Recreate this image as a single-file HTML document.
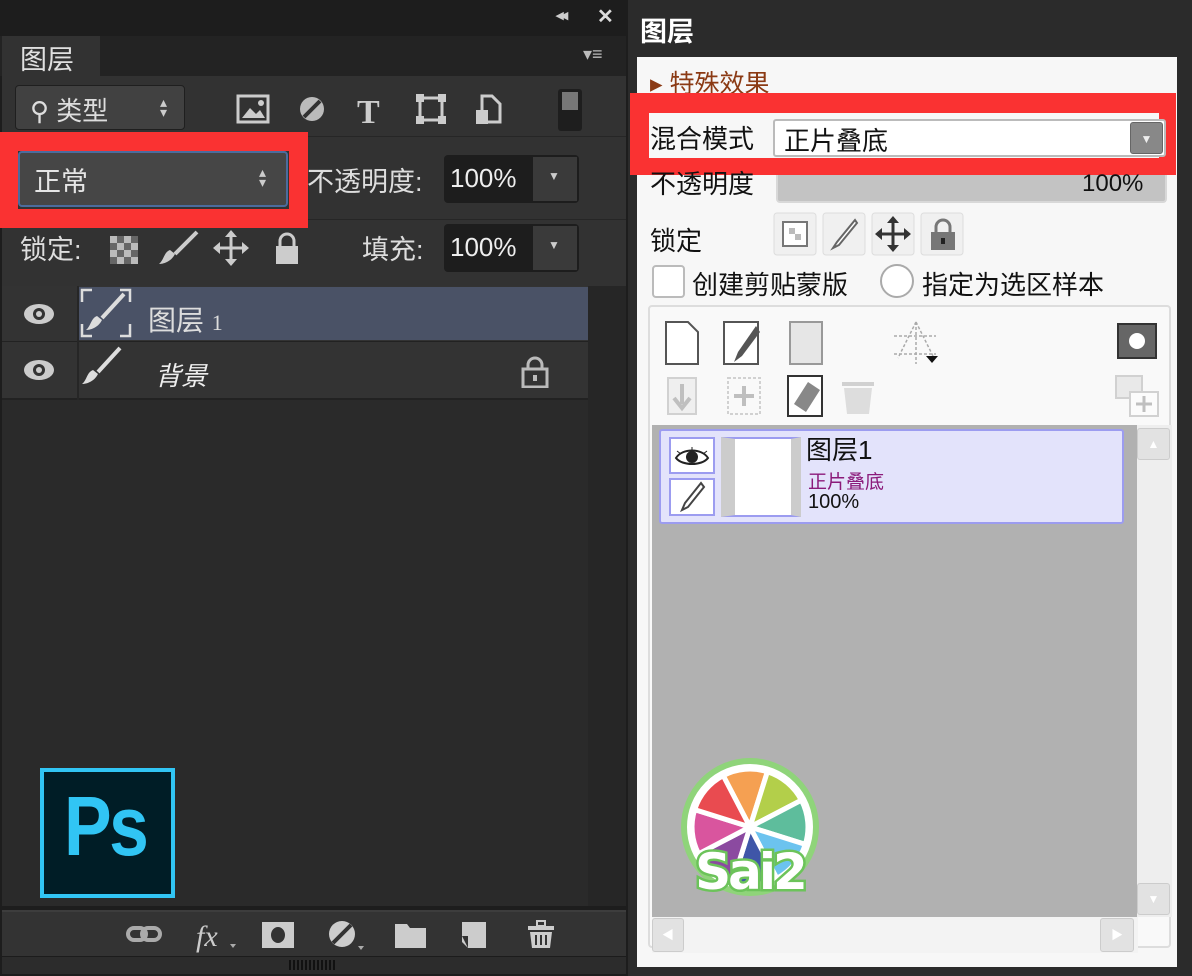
<!DOCTYPE html>
<html><head><meta charset="utf-8">
<style>
*{margin:0;padding:0;box-sizing:border-box}
body{width:1192px;height:976px;background:#2b2b2b;position:relative;overflow:hidden;font-family:"Liberation Sans","Noto Sans CJK SC",sans-serif}
.a{position:absolute}
.cj{font-family:"Liberation Sans","Noto Sans CJK SC",sans-serif}
</style></head><body>
<!-- LEFT PS PANEL -->
<div class="a" style="left:0;top:0;width:628px;height:976px;background:#1d1d1d"></div>
<div class="a" style="left:556px;top:6px;color:#ccc;font-size:15px;font-weight:bold;letter-spacing:-3px">◂◂</div>
<div class="a" style="left:597px;top:4px;color:#ddd;font-size:20px;font-weight:bold">✕</div>
<div class="a" style="left:0;top:36px;width:626px;height:40px;background:#232323"></div>
<div class="a" style="left:2px;top:36px;width:98px;height:40px;background:#323232"></div>
<div class="a cj" style="left:20px;top:38px;color:#e0e0e0;font-size:27px">图层</div>
<div class="a" style="left:583px;top:44px;color:#bbb;font-size:18px">▾≡</div>
<div class="a" style="left:2px;top:76px;width:624px;height:210px;background:#323232"></div>
<div class="a" style="left:2px;top:136px;width:624px;height:1px;background:#262626"></div>
<div class="a" style="left:2px;top:219px;width:624px;height:1px;background:#262626"></div>
<!-- search box -->
<div class="a" style="left:15px;top:85px;width:170px;height:45px;background:#414141;border:1px solid #1f1f1f;border-radius:4px"></div>
<div class="a cj" style="left:30px;top:91px;color:#ddd;font-size:26px">⚲ 类型</div>
<div class="a" style="left:160px;top:97px;color:#ccc;font-size:14px;line-height:10px">▴<br>▾</div>
<svg class="a" style="left:230px;top:90px" width="300" height="40" viewBox="0 0 300 40">
<rect x="8" y="6" width="30" height="26" fill="none" stroke="#ccc" stroke-width="3"/><path d="M12 28l8-10 6 6 4-4 5 8z" fill="#ccc"/><circle cx="31" cy="13" r="3" fill="#ccc"/>
<circle cx="82" cy="19" r="12" fill="#bbb"/><path d="M74 27L90 11" stroke="#323232" stroke-width="4"/>
<text x="127" y="33" font-family="Liberation Serif" font-size="34" font-weight="bold" fill="#ccc">T</text>
<rect x="190" y="8" width="22" height="22" fill="none" stroke="#ccc" stroke-width="3"/><g fill="#ccc"><rect x="186" y="4" width="8" height="8"/><rect x="208" y="4" width="8" height="8"/><rect x="186" y="26" width="8" height="8"/><rect x="208" y="26" width="8" height="8"/></g>
<path d="M252 6h10l8 8v18h-18z" fill="none" stroke="#ccc" stroke-width="3"/><rect x="246" y="20" width="12" height="14" fill="#ccc"/>
</svg>
<div class="a" style="left:558px;top:89px;width:24px;height:42px;background:#1e1e1e;border-radius:3px"></div>
<div class="a" style="left:562px;top:92px;width:16px;height:18px;background:#777"></div>
<!-- blend select -->
<div class="a" style="left:18px;top:151px;width:270px;height:56px;background:#464646;border:2px solid #4b6c9e;border-radius:4px"></div>
<div class="a cj" style="left:34px;top:160px;color:#e5e5e5;font-size:27px">正常</div>
<div class="a" style="left:259px;top:167px;color:#ccc;font-size:14px;line-height:10px">▴<br>▾</div>
<div class="a" style="left:0;top:132px;width:308px;height:96px;border:19px solid #fa3232;border-left-width:18px"></div>
<div class="a cj" style="left:307px;top:160px;color:#ddd;font-size:27px">不透明度:</div>
<div class="a" style="left:444px;top:155px;width:135px;height:48px;background:#1d1d1d;border-radius:4px"></div>
<div class="a" style="left:533px;top:157px;width:44px;height:44px;background:#3a3a3a"></div>
<div class="a" style="left:450px;top:163px;color:#eee;font-size:26px">100%</div>
<div class="a" style="left:548px;top:169px;color:#ccc;font-size:12px">▼</div>
<div class="a cj" style="left:20px;top:228px;color:#ddd;font-size:27px">锁定:</div>
<svg class="a" style="left:105px;top:228px" width="200" height="40" viewBox="0 0 200 40">
<g fill="#bbb"><rect x="5" y="8" width="28" height="28"/></g><g fill="#666"><rect x="12" y="8" width="7" height="7"/><rect x="26" y="8" width="7" height="7"/><rect x="5" y="15" width="7" height="7"/><rect x="19" y="15" width="7" height="7"/><rect x="12" y="22" width="7" height="7"/><rect x="26" y="22" width="7" height="7"/><rect x="5" y="29" width="7" height="7"/><rect x="19" y="29" width="7" height="7"/></g>
<path d="M92 4L70 26" stroke="#ccc" stroke-width="4"/><path d="M54 36c4 0 12-2 16-10l-5-4c-6 2-6 10-11 14z" fill="#ccc"/>
<path d="M126 4v32M110 20h32" stroke="#ccc" stroke-width="3"/><path d="M126 2l-6 7h12zM126 38l-6-7h12zM108 20l7-6v12zM144 20l-7-6v12z" fill="#ccc"/>
<rect x="171" y="18" width="22" height="18" fill="#ccc"/><path d="M175 18v-5a7 7 0 0 1 14 0v5" fill="none" stroke="#ccc" stroke-width="3"/>
</svg>
<div class="a cj" style="left:362px;top:228px;color:#ddd;font-size:27px">填充:</div>
<div class="a" style="left:444px;top:224px;width:135px;height:48px;background:#1d1d1d;border-radius:4px"></div>
<div class="a" style="left:533px;top:226px;width:44px;height:44px;background:#3a3a3a"></div>
<div class="a" style="left:450px;top:232px;color:#eee;font-size:26px">100%</div>
<div class="a" style="left:548px;top:238px;color:#ccc;font-size:12px">▼</div>
<!-- layers list -->
<div class="a" style="left:2px;top:286px;width:586px;height:620px;background:#2a2a2a"></div>
<div class="a" style="left:588px;top:286px;width:38px;height:620px;background:#262626"></div>
<div class="a" style="left:2px;top:286px;width:586px;height:55px;background:#333"></div>
<div class="a" style="left:78px;top:287px;width:510px;height:53px;background:#4a5266"></div>
<div class="a" style="left:2px;top:341px;width:586px;height:59px;background:#333;border-top:1px solid #222;border-bottom:2px solid #222"></div>
<div class="a" style="left:77px;top:286px;width:2px;height:114px;background:#262626"></div>
<svg class="a" style="left:22px;top:300px" width="34" height="90" viewBox="0 0 34 90"><ellipse cx="17" cy="14" rx="15" ry="10" fill="#ccc"/><circle cx="17" cy="14" r="6" fill="#333"/><circle cx="17" cy="14" r="3" fill="#ccc"/><ellipse cx="17" cy="70" rx="15" ry="10" fill="#ccc"/><circle cx="17" cy="70" r="6" fill="#333"/><circle cx="17" cy="70" r="3" fill="#ccc"/></svg>
<svg class="a" style="left:80px;top:288px" width="52" height="110" viewBox="0 0 52 110"><path d="M2 14V2h10M40 2h10v12M2 36v12h10M40 48h10V36" fill="none" stroke="#ddd" stroke-width="2.5"/><path d="M44 6L22 30" stroke="#ddd" stroke-width="4"/><path d="M6 42c4 0 12-2 16-10l-5-4c-6 2-6 10-11 14z" fill="#ddd"/><path d="M40 60L18 84" stroke="#ddd" stroke-width="4"/><path d="M2 96c4 0 12-2 16-10l-5-4c-6 2-6 10-11 14z" fill="#ddd"/></svg>
<div class="a cj" style="left:148px;top:299px;color:#ddd;font-size:28px">图层 <span style="font-size:22px;font-family:'Liberation Serif'">1</span></div>
<div class="a cj" style="left:155px;top:356px;color:#eee;font-size:26px;font-style:italic">背景</div>
<svg class="a" style="left:520px;top:356px" width="30" height="32"><rect x="3" y="13" width="24" height="18" fill="none" stroke="#bbb" stroke-width="3"/><path d="M8 13V9a7 7 0 0 1 14 0v4" fill="none" stroke="#bbb" stroke-width="3"/><rect x="13" y="19" width="4" height="6" fill="#bbb"/></svg>
<!-- Ps logo -->
<div class="a" style="left:40px;top:768px;width:135px;height:130px;background:#001d26;border:4px solid #31c5f4"></div>
<div class="a" style="left:64px;top:778px;color:#31c5f4;font-size:84px;font-weight:bold;font-family:'Liberation Sans Narrow','Liberation Sans';letter-spacing:-3px;transform:scaleX(0.85);transform-origin:left">Ps</div>
<!-- bottom bar -->
<div class="a" style="left:2px;top:910px;width:624px;height:46px;background:#333;border-top:2px solid #3d3d3d"></div>
<div class="a" style="left:2px;top:956px;width:624px;height:18px;background:#2c2c2c;border-top:1px solid #1c1c1c"></div>
<div class="a" style="left:289px;top:960px;width:48px;height:10px;background:repeating-linear-gradient(90deg,#111 0 2px,transparent 2px 4px)"></div>
<svg class="a" style="left:120px;top:914px" width="500" height="40" viewBox="0 0 500 40">
<g fill="none" stroke="#aaa" stroke-width="4"><rect x="8" y="14" width="18" height="12" rx="6"/><rect x="22" y="14" width="18" height="12" rx="6"/></g>
<text x="76" y="32" font-family="Liberation Serif" font-style="italic" font-size="30" fill="#ccc">fx</text><path d="M110 30h6l-3 4z" fill="#aaa"/>
<rect x="142" y="8" width="32" height="26" fill="#ccc"/><ellipse cx="158" cy="21" rx="7" ry="8" fill="#333"/>
<circle cx="222" cy="20" r="13" fill="#ccc"/><path d="M213 29l18-18" stroke="#333" stroke-width="4"/><path d="M238 32h6l-3 4z" fill="#aaa"/>
<path d="M275 10h12l3 4h16v20h-31z" fill="#ccc"/>
<path d="M342 8h24v26h-18l-6-6z" fill="#ccc"/><path d="M342 22h6v12" fill="#333"/>
<rect x="408" y="12" width="26" height="4" fill="#ccc"/><rect x="417" y="7" width="8" height="5" fill="none" stroke="#ccc" stroke-width="2"/><path d="M410 18h22l-2 16h-18z" fill="#ccc"/><path d="M416 21v10M421 21v10M426 21v10" stroke="#333" stroke-width="2"/>
</svg>
<!-- RIGHT SAI PANEL -->
<div class="a cj" style="left:640px;top:10px;color:#fff;font-size:27px;font-weight:bold">图层</div>
<div class="a" style="left:637px;top:57px;width:540px;height:910px;background:#f7f7f7"></div>
<div class="a cj" style="left:650px;top:64px;color:#8b3a14;font-size:25px">▸ 特殊效果</div>
<div class="a" style="left:630px;top:93px;width:546px;height:82px;border:17px solid #fa3232;border-top-width:20px;border-left-width:19px"></div>
<div class="a cj" style="left:650px;top:119px;color:#111;font-size:26px">混合模式</div>
<div class="a" style="left:773px;top:119px;width:393px;height:38px;background:#fff;border:2px solid #bbb;border-radius:3px"></div>
<div class="a cj" style="left:784px;top:121px;color:#111;font-size:26px">正片叠底</div>
<div class="a" style="left:1130px;top:122px;width:33px;height:32px;background:#888;border:1px solid #666;border-radius:3px;color:#eee;font-size:12px;text-align:center;line-height:32px">▼</div>
<div class="a cj" style="left:650px;top:170px;color:#111;font-size:26px;height:33px;overflow:hidden;line-height:28px">不透明度</div>
<div class="a" style="left:776px;top:175px;width:391px;height:28px;background:#c3c3c3;border:2px solid #d8d8d8;border-top:none;border-radius:0 0 4px 4px"></div>
<div class="a" style="left:1082px;top:170px;color:#111;font-size:24px">100%</div>
<div class="a cj" style="left:650px;top:221px;color:#111;font-size:26px">锁定</div>
<svg class="a" style="left:773px;top:212px" width="194" height="44" viewBox="0 0 194 44">
<g fill="#f0f0f0" stroke="#ddd"><rect x="1" y="1" width="42" height="42" rx="3"/><rect x="50" y="1" width="42" height="42" rx="3"/><rect x="99" y="1" width="42" height="42" rx="3"/><rect x="148" y="1" width="42" height="42" rx="3"/></g>
<rect x="10" y="10" width="24" height="24" fill="#fff" stroke="#777" stroke-width="2"/><g fill="#bbb"><rect x="16" y="16" width="6" height="6"/><rect x="22" y="22" width="6" height="6"/></g>
<path d="M82 8L64 30l-4 6 6-3 18-22z" fill="#fff" stroke="#666" stroke-width="2"/>
<path d="M120 6v32M104 22h32" stroke="#333" stroke-width="3"/><path d="M120 4l-6 7h12zM120 40l-6-7h12zM102 22l7-6v12zM138 22l-7-6v12z" fill="#333"/>
<rect x="158" y="20" width="24" height="18" fill="#777"/><path d="M163 20v-5a7 7 0 0 1 14 0v5" fill="none" stroke="#777" stroke-width="3"/><rect x="168" y="26" width="4" height="6" fill="#222"/>
</svg>
<div class="a" style="left:652px;top:265px;width:33px;height:33px;background:#fff;border:2px solid #bbb;border-radius:4px"></div>
<div class="a cj" style="left:692px;top:265px;color:#111;font-size:26px">创建剪贴蒙版</div>
<div class="a" style="left:880px;top:264px;width:34px;height:34px;background:#fff;border:2px solid #aaa;border-radius:50%"></div>
<div class="a cj" style="left:922px;top:265px;color:#111;font-size:26px">指定为选区样本</div>
<!-- group box -->
<div class="a" style="left:648px;top:305px;width:523px;height:643px;border:2px solid #ddd;border-radius:4px;background:#f9f9f9"></div>
<svg class="a" style="left:660px;top:318px" width="505" height="100" viewBox="0 0 505 100">
<path d="M6 4h22l10 10v32H6z" fill="#fff" stroke="#555" stroke-width="2"/>
<rect x="64" y="4" width="34" height="42" fill="#fff" stroke="#555" stroke-width="2"/><path d="M96 8L78 34l-4 10 8-6 18-24z" fill="#555"/>
<path d="M130 4h32v42h-32z" fill="#e6e6e6" stroke="#999" stroke-width="2"/>
<path d="M256 4v42M234 18h42M234 36h42M256 4l-18 36M256 4l18 36" stroke="#aaa" stroke-width="1.5" fill="none" stroke-dasharray="3 2"/><path d="M266 38h12l-6 7z" fill="#111"/>
<rect x="458" y="6" width="38" height="34" fill="#666" stroke="#333" stroke-width="2"/><circle cx="477" cy="23" r="8" fill="#fff"/>
<g opacity="0.35"><rect x="8" y="60" width="28" height="36" fill="#ddd" stroke="#888" stroke-width="2"/><path d="M22 66v20M14 80l8 10 8-10" stroke="#555" stroke-width="4" fill="none"/>
<rect x="68" y="60" width="32" height="36" fill="none" stroke="#888" stroke-width="2" stroke-dasharray="3 2"/><path d="M84 68v20M74 78h20" stroke="#555" stroke-width="4"/></g>
<rect x="128" y="58" width="34" height="40" fill="#fff" stroke="#333" stroke-width="2"/><path d="M134 86l14-22 12 8-14 22z" fill="#888"/>
<g opacity="0.35"><rect x="182" y="64" width="32" height="4" fill="#888"/><path d="M184 70h28l-3 26h-22z" fill="#aaa"/></g>
<g opacity="0.35"><rect x="456" y="58" width="26" height="22" fill="#ccc" stroke="#888" stroke-width="2"/><rect x="470" y="74" width="28" height="24" fill="#fff" stroke="#888" stroke-width="2"/><path d="M484 78v16M476 86h16" stroke="#555" stroke-width="3"/></g>
</svg>
<!-- layer list -->
<div class="a" style="left:652px;top:425px;width:486px;height:492px;background:#b1b1b1"></div>
<div class="a" style="left:1137px;top:425px;width:35px;height:492px;background:#eee"></div>
<div class="a" style="left:1137px;top:428px;width:33px;height:32px;background:#e2e2e2;border:1px solid #ccc;border-radius:3px;color:#fff;font-size:12px;text-align:center;line-height:30px">▲</div>
<div class="a" style="left:1137px;top:883px;width:33px;height:32px;background:#e2e2e2;border:1px solid #ccc;border-radius:3px;color:#fff;font-size:12px;text-align:center;line-height:30px">▼</div>
<div class="a" style="left:652px;top:917px;width:486px;height:36px;background:#f3f3f3"></div>
<div class="a" style="left:652px;top:918px;width:32px;height:34px;background:#e2e2e2;border:1px solid #ccc;border-radius:3px;color:#fff;font-size:12px;text-align:center;line-height:32px">◀</div>
<div class="a" style="left:1100px;top:918px;width:34px;height:34px;background:#e2e2e2;border:1px solid #ccc;border-radius:3px;color:#fff;font-size:12px;text-align:center;line-height:32px">▶</div>
<div class="a" style="left:659px;top:429px;width:465px;height:95px;background:#e3e3fb;border:2px solid #9c9cf0;border-radius:3px"></div>
<div class="a" style="left:669px;top:437px;width:46px;height:37px;background:#fff;border:2px solid #9c9cf0"></div>
<div class="a" style="left:669px;top:478px;width:46px;height:38px;background:#fff;border:2px solid #9c9cf0"></div>
<svg class="a" style="left:671px;top:439px" width="42" height="76"><path d="M5 19c6-10 26-10 32 0c-6 8-26 8-32 0z" fill="#fff" stroke="#222" stroke-width="2"/><circle cx="21" cy="18" r="6" fill="#222"/><path d="M6 12l4 3M36 12l-4 3M21 8v3" stroke="#222"/><path d="M30 44L14 64l-3 7 6-3 16-20z" fill="#fff" stroke="#444" stroke-width="2"/></svg>
<div class="a" style="left:721px;top:437px;width:80px;height:80px;background:#fff;border:2px solid #9c9cf0;border-left:14px solid #ccc;border-right:10px solid #ccc"></div>
<div class="a cj" style="left:806px;top:435px;color:#111;font-size:26px;line-height:30px">图层1</div>
<div class="a cj" style="left:808px;top:467px;color:#8b1a7a;font-size:19px">正片叠底</div>
<div class="a" style="left:808px;top:491px;color:#111;font-size:20px">100%</div>
<!-- Sai2 logo -->
<svg class="a" style="left:670px;top:750px" width="160" height="160" viewBox="-80 -77 160 160">
<circle cx="0" cy="0" r="66" fill="#fff" stroke="#8fd47a" stroke-width="6"/>
<g stroke="#fff" stroke-width="5" stroke-linejoin="round">
<path d="M0 0L-26.8 -51.4A58 58 0 0 1 17.4 -55.3Z" fill="#f5a052"/>
<path d="M0 0L17.4 -55.3A58 58 0 0 1 51.4 -26.8Z" fill="#b3cf4a"/>
<path d="M0 0L51.4 -26.8A58 58 0 0 1 55.3 17.4Z" fill="#5ebd9c"/>
<path d="M0 0L55.3 17.4A58 58 0 0 1 26.8 51.4Z" fill="#6cc3ef"/>
<path d="M0 0L26.8 51.4A58 58 0 0 1 -17.4 55.3Z" fill="#3f56a8"/>
<path d="M0 0L-17.4 55.3A58 58 0 0 1 -51.4 26.8Z" fill="#8b4aa0"/>
<path d="M0 0L-51.4 26.8A58 58 0 0 1 -55.3 -17.4Z" fill="#d9559e"/>
<path d="M0 0L-55.3 -17.4A58 58 0 0 1 -26.8 -51.4Z" fill="#e94b50"/>
</g>
<text x="0" y="62" text-anchor="middle" font-family="DejaVu Sans" font-weight="bold" font-size="50" fill="#fff" stroke="#6cc35a" stroke-width="5" paint-order="stroke" letter-spacing="-3">Sai2</text>
</svg>
</body></html>
